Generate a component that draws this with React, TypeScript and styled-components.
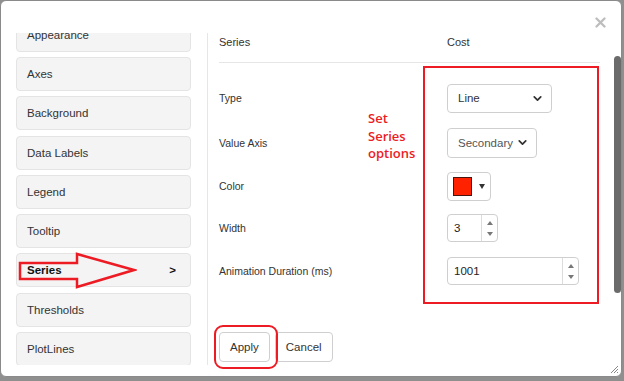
import React from "react";
import styled, { createGlobalStyle } from "styled-components";
import { ChevronDown } from "lucide-react";

const Global = createGlobalStyle`
  html, body { margin: 0; padding: 0; background: #8f8f8f; }
  body { font-family: "Liberation Sans", Arial, sans-serif; color: #333; }
  * { box-sizing: border-box; }
`;

const RED = "#ED1C24";

const Dialog = styled.div`
  position: relative;
  width: 622px;
  height: 377px;
  background: #fff;
  border: 1px solid #8a8a8a;
  border-radius: 6px;
  display: flex;
  flex-direction: column;
  overflow: hidden;
`;

const TopBar = styled.div`
  height: 32px;
  display: flex;
  justify-content: flex-end;
  align-items: flex-end;
  padding: 0 15px 5px 0;
`;

const Body = styled.div`
  height: 332px;
  display: flex;
`;

const BottomBar = styled.div`
  flex: 1;
`;

const NavColumn = styled.div`
  width: 206px;
  padding: 0 16px 0 15px;
  overflow: hidden;
`;

const NavList = styled.div`
  display: flex;
  flex-direction: column;
  gap: 5.3px;
  margin-top: -15.3px;
`;

const NavItem = styled.div<{ $active?: boolean }>`
  height: 34px;
  background: #f4f4f4;
  border: 1px solid #e4e4e4;
  border-radius: 4px;
  display: flex;
  align-items: center;
  justify-content: space-between;
  padding: 0 14px 0 10px;
  font-size: 11.5px;
  font-weight: ${(p) => (p.$active ? 700 : 400)};
  color: ${(p) => (p.$active ? "#111" : "#333")};
`;

const RightPanel = styled.div`
  flex: 1;
  display: flex;
  border-left: 1px solid #e6e6e6;
`;

const Content = styled.div`
  flex: 1;
  display: flex;
  flex-direction: column;
  padding: 0 13px 0 11px;
`;

const HeaderRow = styled.div`
  display: grid;
  grid-template-columns: 228px 1fr;
  font-size: 11px;
  line-height: 18px;
  padding-bottom: 11px;
  border-bottom: 1px solid #e6e6e6;
  color: #333;
`;

const FormGrid = styled.div`
  flex: 1;
  display: grid;
  grid-template-columns: 228px 1fr;
  grid-template-rows: 44.5px 44.25px 42.5px 42.25px 43px;
  align-items: center;
  align-content: start;
  padding-top: 13px;
`;

const Label = styled.div`
  font-size: 10.5px;
  color: #333;
`;

const Footer = styled.div`
  display: flex;
  gap: 5px;
  padding-bottom: 3px;
`;

const Button = styled.button`
  height: 30px;
  padding: 0 10px;
  background: #fff;
  border: 1px solid #cfcfcf;
  border-radius: 4px;
  font-family: "Liberation Sans", Arial, sans-serif;
  font-size: 11.5px;
  color: #333;
`;

const SelectBox = styled.div<{ $w: number; $h: number; $muted?: boolean }>`
  width: ${(p) => p.$w}px;
  height: ${(p) => p.$h}px;
  border: 1px solid #cfcfcf;
  border-radius: 4px;
  display: flex;
  align-items: center;
  justify-content: space-between;
  padding: 0 7px 0 10px;
  font-size: 11.5px;
  color: ${(p) => (p.$muted ? "#555" : "#333")};
`;

const ColorButton = styled.div`
  width: 44px;
  height: 29px;
  border: 1px solid #cfcfcf;
  border-radius: 4px;
  display: flex;
  align-items: center;
  gap: 7px;
  padding-left: 5px;
`;

const Swatch = styled.div`
  width: 19px;
  height: 19px;
  background: #ff2200;
  border: 1px solid #4a1510;
`;

const DownTri = styled.div`
  width: 0;
  height: 0;
  border-left: 3.5px solid transparent;
  border-right: 3.5px solid transparent;
  border-top: 5px solid #333;
`;

const NumberBox = styled.div<{ $w: number }>`
  width: ${(p) => p.$w}px;
  height: 28px;
  border: 1px solid #cfcfcf;
  border-radius: 4px;
  display: flex;
  font-size: 11.5px;
  color: #222;
`;

const NumberValue = styled.div`
  flex: 1;
  display: flex;
  align-items: center;
  padding-left: 6px;
`;

const Spinner = styled.div`
  width: 16px;
  border-left: 1px solid #dcdcdc;
  display: flex;
  flex-direction: column;
  align-items: center;
  justify-content: center;
  gap: 7px;
`;

const SpinTri = styled.div<{ $up?: boolean }>`
  width: 0;
  height: 0;
  border-left: 3.5px solid transparent;
  border-right: 3.5px solid transparent;
  ${(p) => (p.$up ? "border-bottom: 4px solid #777;" : "border-top: 4px solid #777;")}
`;

const ScrollTrack = styled.div`
  width: 8px;
  padding: 23px 0 0 1px;
`;

const ScrollThumb = styled.div`
  width: 7px;
  height: 237px;
  background: #6b6b6b;
  border-radius: 4px;
`;

const RedBox = styled.div`
  position: absolute;
  left: 422px;
  top: 65px;
  width: 176px;
  height: 238px;
  border: 2.5px solid ${RED};
  pointer-events: none;
`;

const ApplyRing = styled.div`
  position: absolute;
  left: 213px;
  top: 324px;
  width: 64px;
  height: 44px;
  border: 2.5px solid ${RED};
  border-radius: 9px;
  pointer-events: none;
`;

const Note = styled.div`
  position: absolute;
  left: 367px;
  top: 109px;
  font-family: "Open Sans", "Liberation Sans", sans-serif;
  font-weight: 600;
  font-size: 13px;
  line-height: 17.5px;
  color: ${RED};
`;

const ArrowSvg = styled.svg`
  position: absolute;
  left: 16px;
  top: 250px;
  pointer-events: none;
`;

const Grip = styled.svg`
  position: absolute;
  right: 2px;
  bottom: 2px;
`;

const navItems = [
  "Appearance",
  "Axes",
  "Background",
  "Data Labels",
  "Legend",
  "Tooltip",
  "Series",
  "Thresholds",
  "PlotLines",
];

export default function App() {
  return (
    <>
      <Global />
      <Dialog>
        <TopBar>
          <svg width="11" height="11" viewBox="0 0 11 11">
            <path d="M1.5 1.5 L9.5 9.5 M9.5 1.5 L1.5 9.5" stroke="#bdbdbd" strokeWidth="2.3" strokeLinecap="round" />
          </svg>
        </TopBar>
        <Body>
          <NavColumn>
            <NavList>
              {navItems.map((n) => (
                <NavItem key={n} $active={n === "Series"}>
                  <span>{n}</span>
                  {n === "Series" && <span>&gt;</span>}
                </NavItem>
              ))}
            </NavList>
          </NavColumn>
          <RightPanel>
            <Content>
              <HeaderRow>
                <div>Series</div>
                <div>Cost</div>
              </HeaderRow>
              <FormGrid>
                <Label>Type</Label>
                <div>
                  <SelectBox $w={105} $h={29}>
                    <span>Line</span>
                    <ChevronDown size={13} strokeWidth={3.2} color="#333" />
                  </SelectBox>
                </div>
                <Label>Value Axis</Label>
                <div>
                  <SelectBox $w={90} $h={30} $muted>
                    <span>Secondary</span>
                    <ChevronDown size={13} strokeWidth={3.2} color="#333" />
                  </SelectBox>
                </div>
                <Label>Color</Label>
                <div>
                  <ColorButton>
                    <Swatch />
                    <DownTri />
                  </ColorButton>
                </div>
                <Label>Width</Label>
                <div>
                  <NumberBox $w={51}>
                    <NumberValue>3</NumberValue>
                    <Spinner>
                      <SpinTri $up />
                      <SpinTri />
                    </Spinner>
                  </NumberBox>
                </div>
                <Label>Animation Duration (ms)</Label>
                <div>
                  <NumberBox $w={132}>
                    <NumberValue>1001</NumberValue>
                    <Spinner>
                      <SpinTri $up />
                      <SpinTri />
                    </Spinner>
                  </NumberBox>
                </div>
              </FormGrid>
              <Footer>
                <Button>Apply</Button>
                <Button>Cancel</Button>
              </Footer>
            </Content>
            <ScrollTrack>
              <ScrollThumb />
            </ScrollTrack>
          </RightPanel>
        </Body>
        <BottomBar />
        <RedBox />
        <ApplyRing />
        <Note>
          Set
          <br />
          Series
          <br />
          options
        </Note>
        <ArrowSvg width="120" height="40" viewBox="0 0 120 40">
          <polygon
            points="3,12 60,12 60,3 117,19 60,36 60,28 3,28"
            fill="none"
            stroke={RED}
            strokeWidth="2.5"
            strokeLinejoin="miter"
          />
        </ArrowSvg>
        <Grip width="9" height="9" viewBox="0 0 9 9">
          <path d="M8 1 L1 8 M8 4 L4 8 M8 7 L7 8" stroke="#888" strokeWidth="1" />
        </Grip>
      </Dialog>
    </>
  );
}
